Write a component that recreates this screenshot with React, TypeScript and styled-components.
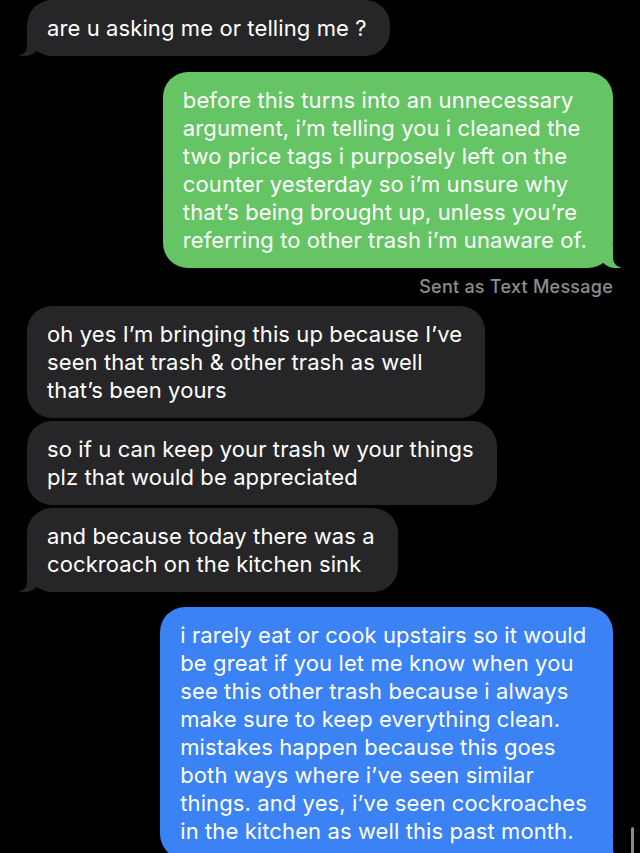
import styled, { createGlobalStyle, css } from "styled-components";

const GlobalStyle = createGlobalStyle`
  html, body {
    margin: 0;
    padding: 0;
    background: #000;
  }
  body {
    font-family: Inter, "Liberation Sans", sans-serif;
    -webkit-font-smoothing: antialiased;
  }
`;

const Screen = styled.div`
  position: relative;
  width: 640px;
  height: 853px;
  overflow: hidden;
  background: #000;
  display: flex;
  flex-direction: column;
  padding: 0 27px;
  box-sizing: border-box;
`;

type Side = "in" | "sms" | "imessage";

const colors: Record<Side, string> = {
  in: "#262628",
  sms: "#65c565",
  imessage: "#3b82f4",
};

const Bubble = styled.div<{ $side: Side; $tail?: boolean; $gap: number }>`
  position: relative;
  align-self: ${(p) => (p.$side === "in" ? "flex-start" : "flex-end")};
  margin-top: ${(p) => p.$gap}px;
  padding: 14px ${(p) => (p.$side === "in" ? "23px" : "26px")} 14px 20px;
  border-radius: 25px;
  background: ${(p) => colors[p.$side]};
  color: #fff;
  font-size: 22px;
  line-height: 28px;
  letter-spacing: 0.1px;
  white-space: nowrap;

  ${(p) =>
    p.$tail &&
    (p.$side === "in"
      ? css`
          &::before {
            content: "";
            position: absolute;
            bottom: 0;
            left: -8px;
            width: 22px;
            height: 22px;
            background: ${colors[p.$side]};
            border-bottom-right-radius: 16px;
          }
          &::after {
            content: "";
            position: absolute;
            bottom: 0;
            left: -11px;
            width: 11px;
            height: 22px;
            background: #000;
            border-bottom-right-radius: 10px;
          }
        `
      : css`
          &::before {
            content: "";
            position: absolute;
            bottom: 0;
            right: -8px;
            width: 22px;
            height: 22px;
            background: ${colors[p.$side]};
            border-bottom-left-radius: 16px;
          }
          &::after {
            content: "";
            position: absolute;
            bottom: 0;
            right: -11px;
            width: 11px;
            height: 22px;
            background: #000;
            border-bottom-left-radius: 10px;
          }
        `)}
`;

const Line = styled.div`
  position: relative;
  z-index: 1;
`;

const Status = styled.div`
  align-self: flex-end;
  margin-top: 8px;
  color: #8d8d92;
  font-size: 18px;
  font-weight: 500;
  line-height: 22px;
  letter-spacing: 0.25px;
`;

const ScrollThumb = styled.div`
  position: absolute;
  right: 6px;
  bottom: -10px;
  width: 3px;
  height: 36px;
  border-radius: 2px;
  background: #8a8a8a;
`;

type Message = {
  side: Side;
  gap: number;
  tail?: boolean;
  lines: string[];
};

const messages: Message[] = [
  { side: "in", gap: 0, tail: true, lines: ["are u asking me or telling me ?"] },
  {
    side: "sms",
    gap: 16,
    tail: true,
    lines: [
      "before this turns into an unnecessary",
      "argument, i’m telling you i cleaned the",
      "two price tags i purposely left on the",
      "counter yesterday so i’m unsure why",
      "that’s being brought up, unless you’re",
      "referring to other trash i’m unaware of.",
    ],
  },
];

const incoming: Message[] = [
  {
    side: "in",
    gap: 8,
    lines: [
      "oh yes I’m bringing this up because I’ve",
      "seen that trash & other trash as well",
      "that’s been yours",
    ],
  },
  {
    side: "in",
    gap: 3,
    lines: ["so if u can keep your trash w your things", "plz that would be appreciated"],
  },
  {
    side: "in",
    gap: 3,
    tail: true,
    lines: ["and because today there was a", "cockroach on the kitchen sink"],
  },
  {
    side: "imessage",
    gap: 15,
    tail: true,
    lines: [
      "i rarely eat or cook upstairs so it would",
      "be great if you let me know when you",
      "see this other trash because i always",
      "make sure to keep everything clean.",
      "mistakes happen because this goes",
      "both ways where i’ve seen similar",
      "things. and yes, i’ve seen cockroaches",
      "in the kitchen as well this past month.",
    ],
  },
];

const renderBubble = (m: Message, key: number) => (
  <Bubble key={key} $side={m.side} $tail={m.tail} $gap={m.gap}>
    {m.lines.map((l, i) => (
      <Line key={i}>{l}</Line>
    ))}
  </Bubble>
);

export default function App() {
  return (
    <>
      <GlobalStyle />
      <Screen>
        {messages.map(renderBubble)}
        <Status>Sent as Text Message</Status>
        {incoming.map(renderBubble)}
        <ScrollThumb />
      </Screen>
    </>
  );
}
